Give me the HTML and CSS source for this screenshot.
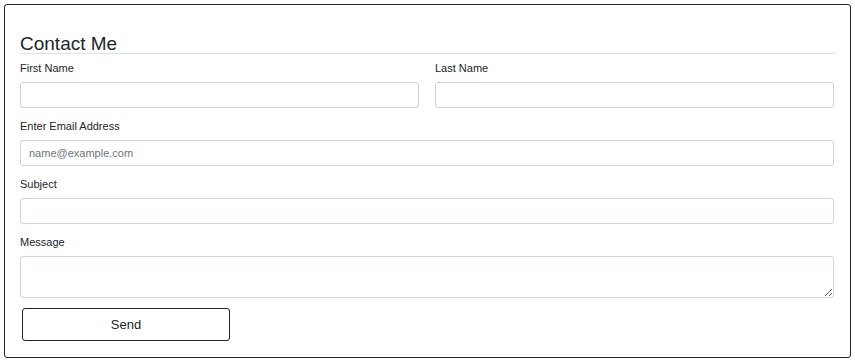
FILE: index.html
```html
<!DOCTYPE html>
<html>
<head>
<meta charset="utf-8">
<link rel="stylesheet" href="styles.css">
</head>
<body>
<div class="card">
  <h2 class="title">Contact Me</h2>
  <form class="form">
    <div class="row">
      <div class="group">
        <label class="label">First Name</label>
        <input class="input" type="text">
      </div>
      <div class="group">
        <label class="label">Last Name</label>
        <input class="input" type="text">
      </div>
    </div>
    <div class="group">
      <label class="label">Enter Email Address</label>
      <input class="input" type="email" placeholder="name@example.com">
    </div>
    <div class="group">
      <label class="label">Subject</label>
      <input class="input" type="text">
    </div>
    <div class="group">
      <label class="label">Message</label>
      <textarea class="input textarea"></textarea>
    </div>
    <button class="btn" type="button">Send</button>
  </form>
</div>
</body>
</html>
```

FILE: styles.css
```css
html, body {
  margin: 0;
  padding: 0;
  background: #fff;
}
body {
  font-family: "Liberation Sans", Arial, sans-serif;
  color: #212529;
}
.card {
  margin: 4px 0 0 4px;
  width: 847px;
  height: 354px;
  box-sizing: border-box;
  border: 1px solid #222;
  border-radius: 3px;
  padding: 29px 16px 0 15px;
}
.title {
  margin: 0;
  font-size: 19px;
  font-weight: 400;
  line-height: 19px;
  border-bottom: 1px solid #dee2e6;
  color: #212529;
}
.form {
  display: flex;
  flex-direction: column;
  margin-top: 6px;
}
.row {
  display: grid;
  grid-template-columns: 1fr 1fr;
  column-gap: 16px;
}
.group {
  display: flex;
  flex-direction: column;
  margin-bottom: 10px;
}
.label {
  font-size: 11px;
  line-height: 16px;
  margin-bottom: 6px;
  color: #212529;
}
.input {
  height: 26px;
  box-sizing: border-box;
  border: 1px solid #ced4da;
  border-radius: 3px;
  padding: 0 8px;
  font-family: "Liberation Sans", Arial, sans-serif;
  font-size: 11px;
  color: #495057;
  background: #fff;
  outline: none;
  margin: 0;
}
.input::placeholder {
  color: #6c757d;
}
.textarea {
  height: 42px;
  resize: both;
  padding: 4px 8px;
}
.btn {
  align-self: flex-start;
  margin-left: 2px;
  width: 208px;
  height: 33px;
  border: 1px solid #222;
  border-radius: 3px;
  background: #fff;
  font-family: "Liberation Sans", Arial, sans-serif;
  font-size: 13px;
  color: #212529;
  padding: 0;
}
```
